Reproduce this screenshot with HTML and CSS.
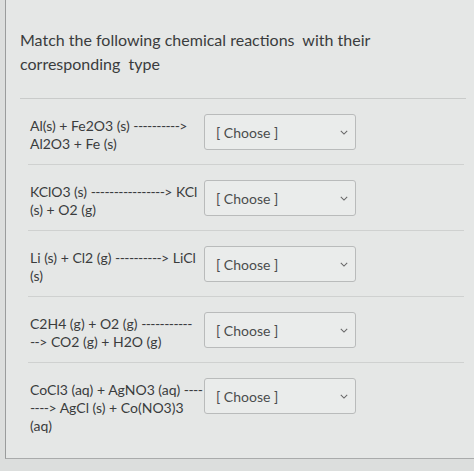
FILE: index.html
```html
<!DOCTYPE html>
<html>
<head>
<meta charset="utf-8">
<link rel="stylesheet" href="styles.css">
</head>
<body>
<div class="panel">
  <div class="question"><p>Match the following chemical reactions&nbsp; with their corresponding&nbsp; type</p></div>
  <div class="rows">
    <div class="row">
      <div class="eq">Al(s) + Fe2O3 (s) <span class="dash">----------</span>&gt;<br>Al2O3 + Fe (s)</div>
      <div class="select"><span>[ Choose ]</span><svg viewBox="0 0 10 6" class="chev"><path d="M1 1 L5 5 L9 1" fill="none" stroke="#666" stroke-width="1.3"/></svg></div>
    </div>
    <div class="row">
      <div class="eq">KClO3 (s) <span class="dash">----------------</span>&gt; KCl<br>(s) + O2 (g)</div>
      <div class="select"><span>[ Choose ]</span><svg viewBox="0 0 10 6" class="chev"><path d="M1 1 L5 5 L9 1" fill="none" stroke="#666" stroke-width="1.3"/></svg></div>
    </div>
    <div class="row">
      <div class="eq">Li (s) + Cl2 (g) <span class="dash">----------</span>&gt; LiCl<br>(s)</div>
      <div class="select"><span>[ Choose ]</span><svg viewBox="0 0 10 6" class="chev"><path d="M1 1 L5 5 L9 1" fill="none" stroke="#666" stroke-width="1.3"/></svg></div>
    </div>
    <div class="row">
      <div class="eq">C2H4 (g) + O2 (g) <span class="dash">-----------</span><br><span class="dash">--</span>&gt; CO2 (g) + H2O (g)</div>
      <div class="select"><span>[ Choose ]</span><svg viewBox="0 0 10 6" class="chev"><path d="M1 1 L5 5 L9 1" fill="none" stroke="#666" stroke-width="1.3"/></svg></div>
    </div>
    <div class="row last">
      <div class="eq">CoCl3 (aq) + AgNO3 (aq) <span class="dash">----</span><br><span class="dash">----</span>&gt; AgCl (s) + Co(NO3)3<br>(aq)</div>
      <div class="select"><span>[ Choose ]</span><svg viewBox="0 0 10 6" class="chev"><path d="M1 1 L5 5 L9 1" fill="none" stroke="#666" stroke-width="1.3"/></svg></div>
    </div>
  </div>
</div>
</body>
</html>
```
FILE: styles.css
```css
html, body {
  margin: 0;
  padding: 0;
}
body {
  background: #dcdedd;
  font-family: Lato, "Open Sans", sans-serif;
  color: #3a3c3d;
  width: 474px;
  height: 471px;
  overflow: hidden;
}
.panel {
  margin-left: 5px;
  height: 459px;
  box-sizing: border-box;
  border-left: 1.5px solid #9a9c9c;
  border-bottom: 1.5px solid #a9abab;
  background: #e5e7e6;
  padding: 28px 8px 0 14px;
}
.question {
  padding-bottom: 22px;
  border-bottom: 1px solid #c9cbca;
}
.question p {
  margin: 0;
  font-size: 16px;
  line-height: 24px;
  width: 380px;
}
.row {
  display: grid;
  grid-template-columns: 170px 152px;
  column-gap: 4px;
  align-items: start;
  margin: 0 2px 0 8px;
  padding: 15px 0 11px 2px;
  border-bottom: 1px solid #cfd1d0;
}
.row.last {
  border-bottom: none;
}
.eq {
  font-size: 14px;
  line-height: 18px;
  padding-top: 3px;
  white-space: nowrap;
}
.dash {
  letter-spacing: -0.6px;
}
.select {
  height: 36px;
  box-sizing: border-box;
  border: 1px solid #b9bbbb;
  border-radius: 3px;
  background: #eaeceb;
  display: flex;
  align-items: center;
  justify-content: space-between;
  padding: 0 7px 0 11px;
  font-size: 14px;
  color: #4a4c4d;
}
.chev {
  width: 8px;
  height: 5px;
}
```
